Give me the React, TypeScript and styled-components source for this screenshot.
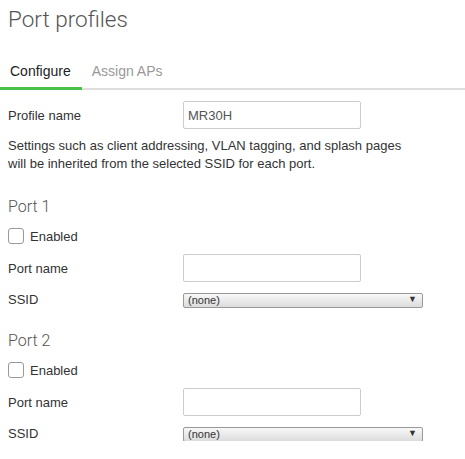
import styled, { createGlobalStyle } from "styled-components";

const GlobalStyle = createGlobalStyle`
    body {
        margin: 0;
        background: #fff;
        font-family: "Liberation Sans", Arial, sans-serif;
        font-size: 13px;
        color: #333;
    }
`

type PortProps = {
    number: number
}

const Port = (props: PortProps) => {
    return (
        <Section>
            <PortTitle>Port {props.number}</PortTitle>
            <CheckRow>
                <Checkbox type="checkbox" />
                <span>Enabled</span>
            </CheckRow>
            <Row $gap={10}>
                <Label>Port name</Label>
                <TextInput type="text" defaultValue="" />
            </Row>
            <Row $gap={10}>
                <Label>SSID</Label>
                <SelectWrap>
                    <Select defaultValue="none">
                        <option value="none">(none)</option>
                    </Select>
                    <Arrow>▼</Arrow>
                </SelectWrap>
            </Row>
        </Section>
    );
};

export default function App() {
    return (
        <>
            <GlobalStyle />
            <Page>
                <Title>Port profiles</Title>
                <TabBar>
                    <Tab $active>Configure</Tab>
                    <Tab>Assign APs</Tab>
                </TabBar>
                <Row $gap={11}>
                    <Label>Profile name</Label>
                    <TextInput type="text" defaultValue="MR30H" />
                </Row>
                <Note>
                    Settings such as client addressing, VLAN tagging, and splash pages
                    <br />
                    will be inherited from the selected SSID for each port.
                </Note>
                <Port number={1} />
                <Port number={2} />
            </Page>
        </>
    );
}

const Page = styled.div`
    padding: 0 8px;
`

const Title = styled.h1`
    margin: 4px 0 0;
    font-family: Roboto, "Liberation Sans", sans-serif;
    font-weight: 300;
    font-size: 22.5px;
    line-height: 30px;
    color: #555;
`

const TabBar = styled.div`
    display: flex;
    margin: 20px -8px 0;
    border-bottom: 2px solid #ddd;
`

const Tab = styled.div<{ $active?: boolean }>`
    padding: 9px 11px 7px 10px;
    margin-bottom: -2px;
    font-size: 14px;
    line-height: 17px;
    color: ${p => p.$active ? "#222" : "#999"};
    border-bottom: 3px solid ${p => p.$active ? "#4bc046" : "transparent"};
    cursor: pointer;
`

const Row = styled.div<{ $gap: number }>`
    display: flex;
    align-items: center;
    margin-top: ${p => p.$gap}px;
`

const Label = styled.label`
    width: 175px;
    flex-shrink: 0;
`

const TextInput = styled.input`
    box-sizing: border-box;
    width: 178px;
    height: 28px;
    margin: 0;
    padding: 0 4px;
    border: 1px solid #ccc;
    border-radius: 2px;
    font-family: "Liberation Sans", Arial, sans-serif;
    font-size: 13px;
    color: #555;
    outline: none;
`

const Note = styled.p`
    margin: 8px 0 0;
    line-height: 18px;
`

const Section = styled.div`
    margin-top: 24px;
`

const PortTitle = styled.h2`
    margin: 0;
    font-family: Roboto, "Liberation Sans", sans-serif;
    font-weight: 300;
    font-size: 16px;
    line-height: 20px;
    color: #555;
`

const CheckRow = styled.label`
    display: flex;
    align-items: center;
    gap: 6px;
    margin-top: 11px;
    height: 16px;
`

const Checkbox = styled.input`
    appearance: none;
    width: 16px;
    height: 16px;
    margin: 0;
    border: 1px solid #999;
    border-radius: 3px;
    background: #fff;
`

const SelectWrap = styled.div`
    position: relative;
    width: 240px;
    height: 15px;
`

const Select = styled.select`
    appearance: none;
    box-sizing: border-box;
    width: 100%;
    height: 15px;
    margin: 0;
    padding: 0 0 0 4px;
    border: 1px solid #999;
    border-radius: 2px;
    background: linear-gradient(#f8f8f8, #dcdcdc);
    font-family: "Liberation Sans", Arial, sans-serif;
    font-size: 11px;
    line-height: 13px;
    color: #333;
    outline: none;
`

const Arrow = styled.span`
    position: absolute;
    right: 6px;
    top: 2px;
    font-size: 9px;
    line-height: 11px;
    color: #333;
    pointer-events: none;
`
